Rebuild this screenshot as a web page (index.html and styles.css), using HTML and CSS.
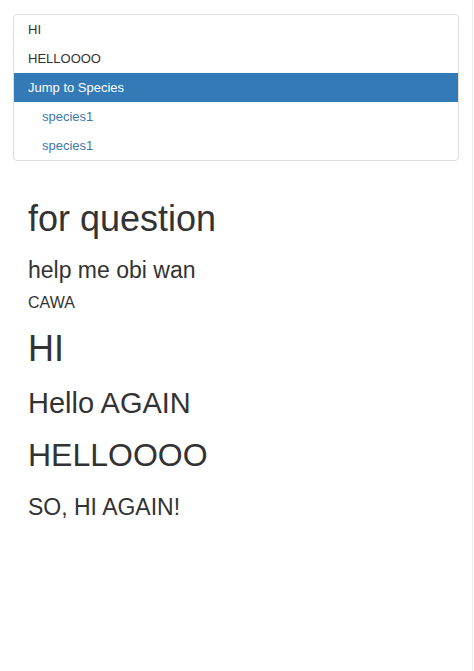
FILE: index.html
```html
<!DOCTYPE html>
<html lang="en">
<head>
<meta charset="utf-8">
<title>for question</title>
<link rel="stylesheet" href="styles.css">
</head>
<body>
<div class="page">
  <nav class="side-nav">
    <ul class="nav-list">
      <li class="nav-item"><a href="#hi">HI</a></li>
      <li class="nav-item"><a href="#hellooo">HELLOOOO</a></li>
      <li class="nav-item active"><a href="#species">Jump to Species</a></li>
      <li class="nav-item sub"><a href="#species1">species1</a></li>
      <li class="nav-item sub"><a href="#species1b">species1</a></li>
    </ul>
  </nav>
  <main class="content">
    <h1 class="t-title">for question</h1>
    <h3 class="t-help">help me obi wan</h3>
    <p class="t-cawa">CAWA</p>
    <h1 class="t-hi" id="hi">HI</h1>
    <h2 class="t-hello">Hello AGAIN</h2>
    <h1 class="t-hellooo" id="hellooo">HELLOOOO</h1>
    <h3 class="t-so">SO, HI AGAIN!</h3>
  </main>
</div>
</body>
</html>
```

FILE: styles.css
```css
html, body {
  margin: 0;
  padding: 0;
  background: #fff;
}

body {
  font-family: "Liberation Sans", Arial, Helvetica, sans-serif;
  color: #333;
}

.page {
  width: 473px;
  min-height: 671px;
  border-right: 1px solid #ececec;
  padding-top: 14px;
  box-sizing: border-box;
}

.side-nav {
  margin: 0 13px 0 13px;
  border: 1px solid #ddd;
  border-radius: 4px;
  background: #fff;
  overflow: hidden;
}

.nav-list {
  list-style: none;
  margin: 0;
  padding: 0;
}

.nav-item a {
  display: block;
  padding: 4px 14px;
  font-size: 13px;
  line-height: 21px;
  color: #333;
  text-decoration: none;
}

.nav-item.active a {
  background: #337ab7;
  color: #fff;
}

.nav-item.sub a {
  padding-left: 28px;
  color: #3c78b0;
}

.content {
  padding-left: 28px;
}

.content h1,
.content h2,
.content h3,
.content p {
  margin: 0;
  font-weight: 400;
  color: #333;
}

.t-title {
  font-size: 36px;
  line-height: 40px;
  margin-top: 38px !important;
}

.t-help {
  font-size: 23px;
  line-height: 26px;
  margin-top: 18px !important;
}

.t-cawa {
  font-size: 16px;
  line-height: 18px;
  margin-top: 11px !important;
}

.t-hi {
  font-size: 36px;
  line-height: 40px;
  margin-top: 17px !important;
}

.t-hello {
  font-size: 29px;
  line-height: 32px;
  margin-top: 18px !important;
}

.t-hellooo {
  font-size: 32px;
  line-height: 36px;
  margin-top: 18px !important;
}

.t-so {
  font-size: 23px;
  line-height: 26px;
  margin-top: 21px !important;
}
```
